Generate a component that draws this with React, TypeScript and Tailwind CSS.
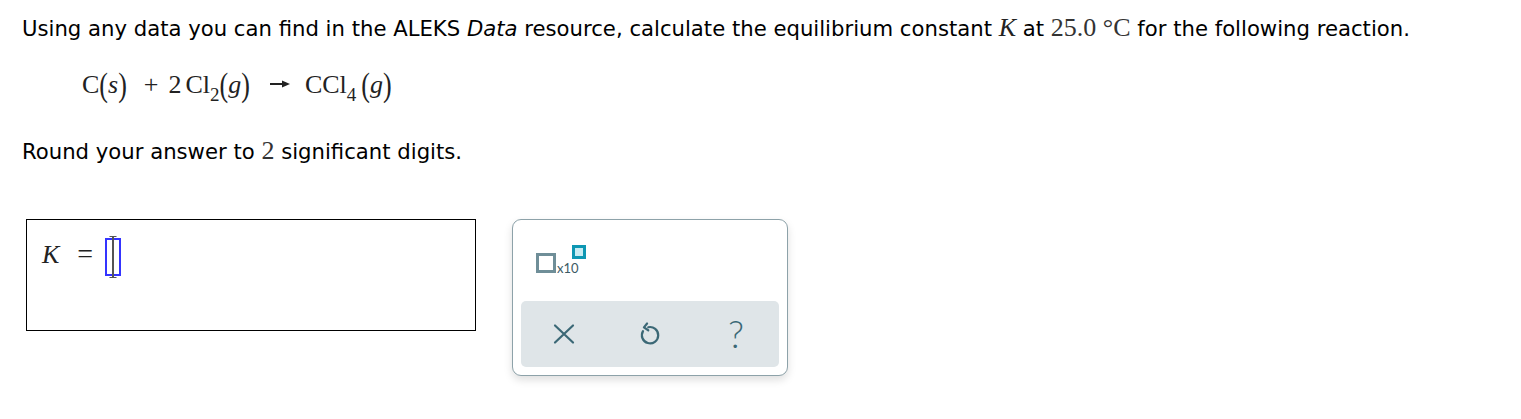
const sans = { fontFamily: '"DejaVu Sans", Verdana, sans-serif' };
const serif = { fontFamily: '"Liberation Serif", "Times New Roman", serif' };

function Paren({ ch }: { ch: string }) {
  return (
    <span className="inline-block scale-y-[1.3] text-[#222]" style={serif}>
      {ch}
    </span>
  );
}

function Cursor() {
  return (
    <span className="relative top-[3px] inline-block w-[16px] h-[38px] border-2 border-[#3434ff] align-middle">
      <span className="absolute left-1/2 -translate-x-1/2 -top-[4px] -bottom-[4px] w-[2px] bg-[#555]" />
      <span className="absolute left-1/2 -translate-x-1/2 -top-[4px] w-[7px] h-[1px] bg-[#555]" />
      <span className="absolute left-1/2 -translate-x-1/2 -bottom-[4px] w-[7px] h-[1px] bg-[#555]" />
    </span>
  );
}

function CloseIcon() {
  return (
    <svg width="22" height="22" viewBox="0 0 22 22" fill="none" stroke="currentColor" strokeWidth="2.2" strokeLinecap="round">
      <path d="M2 2.5L20 19.5M20 2.5L2 19.5" />
    </svg>
  );
}

function UndoIcon() {
  return (
    <svg width="28" height="28" viewBox="0 0 24 24" fill="none" stroke="currentColor" strokeWidth="1.9" strokeLinecap="round" strokeLinejoin="round">
      <path d="M10.5 6.2A7 7 0 1 1 6 9.5" />
      <path d="M9.5 3L6.8 6.3L10.5 8.8" />
    </svg>
  );
}

export default function App() {
  return (
    <div className="w-[1521px] h-[419px] bg-white text-black px-[22px] pt-[15px]" style={sans}>
      <p className="text-[21.2px] leading-[26px] whitespace-nowrap">
        Using any data you can find in the ALEKS <i>Data</i> resource, calculate the equilibrium constant{' '}
        <span style={serif} className="text-[26px] italic text-[#222]">K</span> at{' '}
        <span style={serif} className="text-[26px] text-[#333]">25.0 °C</span> for the following reaction.
      </p>

      <div className="pl-[60px] mt-[22px] h-[40px] flex items-center text-[26px] text-[#222]" style={serif}>
        <span>C</span>
        <Paren ch="(" />
        <i>s</i>
        <Paren ch=")" />
        <span className="ml-[17px] mr-[10px]">+</span>
        <span>2</span>
        <span className="ml-[4px]">Cl</span>
        <span className="relative top-[11px] text-[19px]">2</span>
        <Paren ch="(" />
        <i>g</i>
        <Paren ch=")" />
        <span className="ml-[20px] mr-[15px] flex items-center shrink-0">
          <svg width="20" height="10" viewBox="0 0 20 10" className="shrink-0">
            <path d="M0 5H14" stroke="#222" strokeWidth="2" />
            <path d="M12 1.5L20 5L12 8.5Z" fill="#222" />
          </svg>
        </span>
        <span>CCl</span>
        <span className="relative top-[11px] text-[19px]">4</span>
        <span className="ml-[5px]" />
        <Paren ch="(" />
        <i>g</i>
        <Paren ch=")" />
      </div>

      <p className="text-[21.2px] leading-[26px] mt-[34px]">
        Round your answer to <span style={serif} className="text-[26px] text-[#333]">2</span> significant digits.
      </p>

      <div className="flex items-start gap-[36px] mt-[54px] pl-[4px]">
        <div className="w-[450px] h-[112px] border border-black pl-[15px] pt-[13px]">
          <div className="flex items-center text-[26px] text-[#222]" style={serif}>
            <i>K</i>
            <span className="ml-[18px] mr-[12px] text-[28px]">=</span>
            <Cursor />
          </div>
        </div>

        <div className="w-[276px] h-[157px] rounded-[9px] border border-[#8da2a9] bg-white shadow-[0px_4px_8px_rgba(0,0,0,0.13)] px-[8px] pt-[24px]">
          <div className="relative h-[33px]">
            <span className="absolute left-[15px] top-[9px] w-[20px] h-[20px] border-[3px] border-[#6f8e98] bg-white" />
            <span className="absolute left-[36px] top-[15px] text-[13px] text-[#3c5a64]" style={{ fontFamily: 'Lato, sans-serif' }}>x10</span>
            <span className="absolute left-[51px] top-[1px] w-[14px] h-[14px] border-[3px] border-[#0d97b3] bg-[#c8ecf3]" />
          </div>
          <div className="mt-[24px] h-[66px] rounded-[5px] bg-[#dfe5e8] flex items-center text-[#3b6876]">
            <div className="w-[86px] flex justify-center">
              <CloseIcon />
            </div>
            <div className="w-[86px] flex justify-center">
              <UndoIcon />
            </div>
            <div className="w-[86px] flex justify-center">
              <span className="text-[37px] leading-none font-light -mt-[2px]" style={{ fontFamily: 'Lato, sans-serif' }}>?</span>
            </div>
          </div>
        </div>
      </div>
    </div>
  );
}
